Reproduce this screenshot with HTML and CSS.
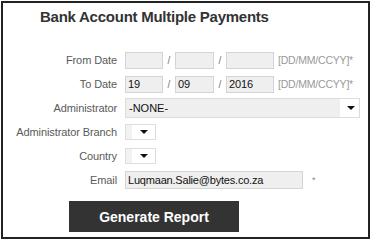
FILE: index.html
```html
<!DOCTYPE html>
<html>
<head>
<meta charset="utf-8">
<link rel="stylesheet" href="styles.css">
</head>
<body>
<div class="panel">
  <h1 class="title">Bank Account Multiple Payments</h1>
  <div class="form">
    <div class="row">
      <div class="label">From Date</div>
      <div class="field">
        <span class="box dd"></span><span class="slash">/</span><span class="box mm"></span><span class="slash">/</span><span class="box yy"></span><span class="hint">[DD/MM/CCYY]*</span>
      </div>
    </div>
    <div class="row">
      <div class="label">To Date</div>
      <div class="field">
        <span class="box dd">19</span><span class="slash">/</span><span class="box mm">09</span><span class="slash">/</span><span class="box yy">2016</span><span class="hint">[DD/MM/CCYY]*</span>
      </div>
    </div>
    <div class="row">
      <div class="label">Administrator</div>
      <div class="field">
        <span class="select wide"><span class="sel-fill">-NONE-</span><span class="arrow"></span></span>
      </div>
    </div>
    <div class="row">
      <div class="label">Administrator Branch</div>
      <div class="field">
        <span class="select small"><span class="sel-fill"></span><span class="arrow"></span></span>
      </div>
    </div>
    <div class="row">
      <div class="label">Country</div>
      <div class="field">
        <span class="select small"><span class="sel-fill"></span><span class="arrow"></span></span>
      </div>
    </div>
    <div class="row">
      <div class="label">Email</div>
      <div class="field">
        <span class="box email">Luqmaan.Salie@bytes.co.za</span><span class="star">*</span>
      </div>
    </div>
  </div>
  <div class="actions">
    <button class="btn">Generate Report</button>
  </div>
</div>
</body>
</html>
```
FILE: styles.css
```css
html, body {
  margin: 0;
  padding: 0;
  background: #fff;
}
body {
  font-family: "Liberation Sans", Arial, sans-serif;
}
.panel {
  margin: 1px;
  width: 365px;
  height: 234px;
  border: 2px solid #222;
  box-sizing: content-box;
}
.title {
  margin: 0;
  padding: 5px 0 0 37px;
  font-size: 15px;
  letter-spacing: -0.25px;
  line-height: 17px;
  font-weight: bold;
  color: #333;
  height: 40px;
  box-sizing: border-box;
}
.form {
  display: flex;
  flex-direction: column;
  margin-top: 5px;
}
.row {
  display: flex;
  align-items: center;
  height: 24px;
}
.label {
  width: 114px;
  text-align: right;
  font-size: 11px;
  letter-spacing: -0.1px;
  color: #5a5a5a;
  flex: none;
}
.field {
  margin-left: 8px;
  display: flex;
  align-items: center;
}
.box {
  display: inline-block;
  height: 17px;
  box-sizing: border-box;
  border: 1px solid #d4d4d4;
  background: #efefef;
  font-size: 11px;
  letter-spacing: -0.1px;
  line-height: 15px;
  color: #111;
  padding-left: 2px;
}
.dd { width: 38px; }
.mm { width: 39px; }
.yy { width: 48px; }
.slash {
  width: 12px;
  text-align: center;
  font-size: 10px;
  color: #777;
}
.hint {
  margin-left: 4px;
  font-size: 10.5px;
  color: #999;
  letter-spacing: -0.2px;
}
.select {
  display: flex;
  align-items: center;
  box-sizing: border-box;
  border: 1px solid #ddd;
  background: #fff;
}
.select.wide {
  width: 235px;
  height: 20px;
}
.select.small {
  width: 31px;
  height: 16px;
}
.sel-fill {
  align-self: stretch;
  background: #efefef;
  font-size: 11px;
  line-height: 18px;
  color: #111;
  padding-left: 3px;
}
.wide .sel-fill {
  width: 211px;
}
.small .sel-fill {
  width: 6px;
  padding-left: 0;
  background: #f2f2f2;
}
.arrow {
  width: 0;
  height: 0;
  border-left: 4px solid transparent;
  border-right: 4px solid transparent;
  border-top: 4px solid #111;
  margin-left: 7px;
}
.small .arrow {
  margin-left: 8px;
}
.email {
  width: 178px;
  height: 18px;
  line-height: 16px;
  font-size: 11px;
  letter-spacing: -0.2px;
}
.star {
  margin-left: 9px;
  font-size: 9px;
  color: #888;
}
.actions {
  margin-top: 9px;
  padding-left: 66px;
}
.btn {
  width: 170px;
  height: 31px;
  border: none;
  background: #333;
  color: #fff;
  font-family: "Liberation Sans", Arial, sans-serif;
  font-size: 14px;
  font-weight: bold;
  padding: 0;
  margin: 0;
}
```
